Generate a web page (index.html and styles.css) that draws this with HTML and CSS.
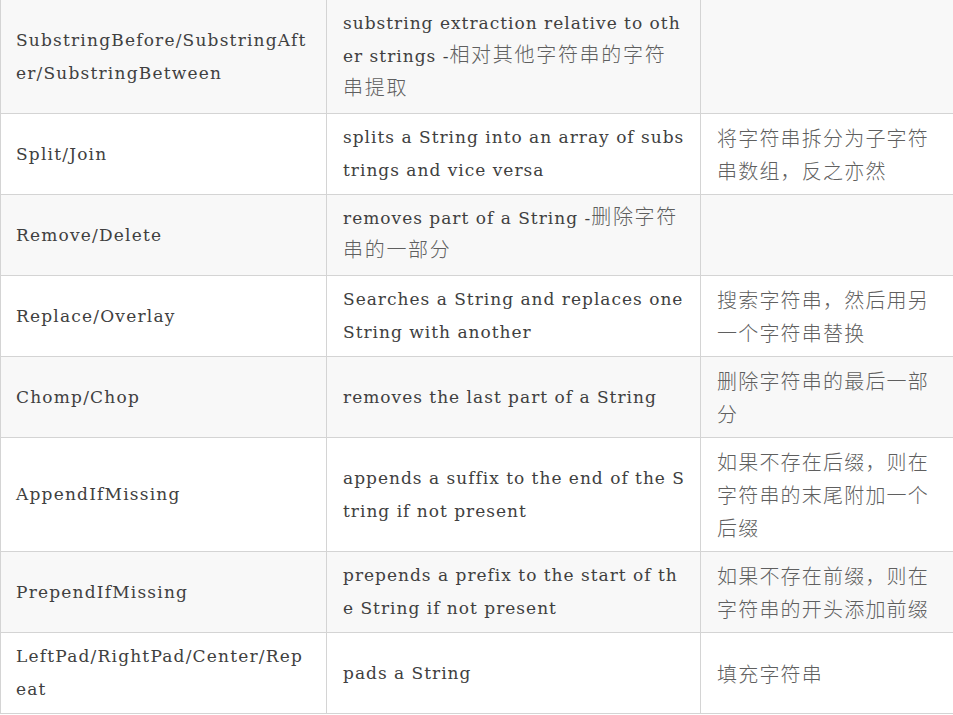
FILE: index.html
```html
<!DOCTYPE html>
<html lang="zh">
<head>
<meta charset="utf-8">
<link rel="stylesheet" href="styles.css">
</head>
<body>
<div class="wrap">
<table class="tbl">
  <colgroup><col class="c1"><col class="c2"><col class="c3"></colgroup>
  <tbody>
    <tr><td class="name">SubstringBefore/SubstringAfter/SubstringBetween</td><td class="desc">substring extraction relative to other strings -<span class="zh">相对其他字符串的字符串提取</span></td><td class="zhc"></td></tr>
    <tr><td class="name">Split/Join</td><td class="desc">splits a String into an array of substrings and vice versa</td><td class="zhc">将字符串拆分为子字符串数组，反之亦然</td></tr>
    <tr><td class="name">Remove/Delete</td><td class="desc">removes part of a String -<span class="zh">删除字符串的一部分</span></td><td class="zhc"></td></tr>
    <tr><td class="name">Replace/Overlay</td><td class="desc">Searches a String and replaces one String with another</td><td class="zhc">搜索字符串，然后用另一个字符串替换</td></tr>
    <tr><td class="name">Chomp/Chop</td><td class="desc">removes the last part of a String</td><td class="zhc">删除字符串的最后一部分</td></tr>
    <tr><td class="name">AppendIfMissing</td><td class="desc">appends a suffix to the end of the String if not present</td><td class="zhc">如果不存在后缀，则在字符串的末尾附加一个后缀</td></tr>
    <tr><td class="name">PrependIfMissing</td><td class="desc">prepends a prefix to the start of the String if not present</td><td class="zhc">如果不存在前缀，则在字符串的开头添加前缀</td></tr>
    <tr><td class="name">LeftPad/RightPad/Center/Repeat</td><td class="desc">pads a String</td><td class="zhc">填充字符串</td></tr>
  </tbody>
</table>
</div>
</body>
</html>
```
FILE: styles.css
```css
html, body {
  margin: 0;
  padding: 0;
  background: #fff;
}
.wrap {
  width: 953px;
  height: 715px;
  overflow: hidden;
}
.tbl {
  border-collapse: collapse;
  table-layout: fixed;
  width: 960px;
  margin-top: -1px;
  font-family: "DejaVu Serif", "Noto Sans CJK SC", serif;
  font-size: 17px;
  letter-spacing: 1px;
  line-height: 33px;
  color: #404040;
}
.c1 { width: 326px; }
.c2 { width: 374px; }
.c3 { width: 260px; }
.tbl td {
  border: 1px solid #d4d4d4;
  padding: 7px 16px;
  vertical-align: middle;
  word-break: break-all;
}
.tbl td.name {
  padding-left: 15px;
  letter-spacing: 1.2px;
}
.tbl td.desc {
  padding-right: 15px;
}
.tbl tr:nth-child(odd) td { background: #f8f8f8; }
.tbl tr:nth-child(even) td { background: #fff; }
.zh {
  font-family: "Noto Sans CJK SC", sans-serif;
  font-weight: 300;
  font-size: 20px;
  line-height: 1;
  letter-spacing: 1.7px;
  color: #5f5f5f;
}
.tbl td.zhc {
  font-family: "Noto Sans CJK SC", sans-serif;
  font-weight: 300;
  font-size: 20px;
  letter-spacing: 1.2px;
  color: #5f5f5f;
}
```
